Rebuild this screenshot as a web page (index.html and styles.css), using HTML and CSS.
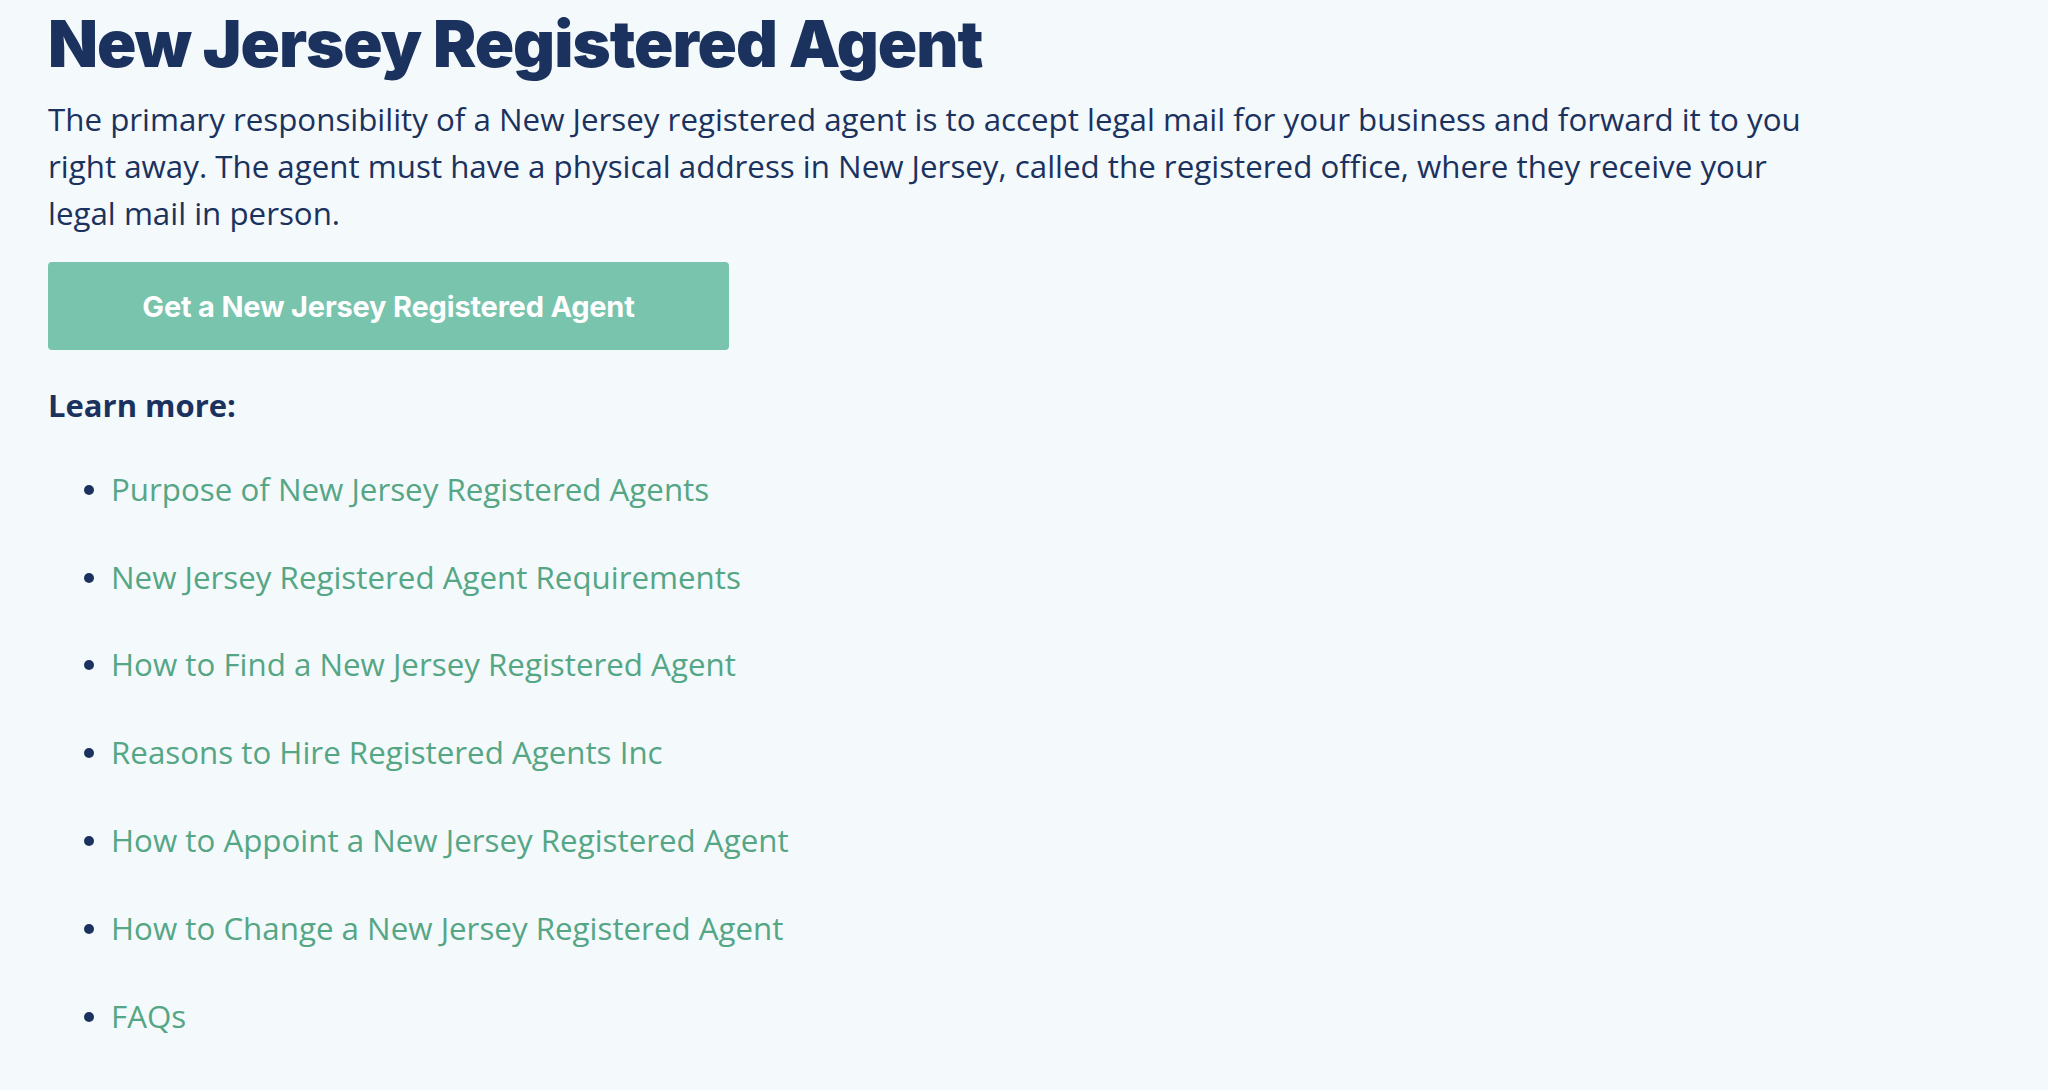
FILE: index.html
```html
<!DOCTYPE html>
<html lang="en">
<head>
<meta charset="utf-8">
<title>New Jersey Registered Agent</title>
<link rel="stylesheet" href="styles.css">
</head>
<body>
<main class="content">
  <h1 class="title">New Jersey Registered Agent</h1>
  <p class="intro">The primary responsibility of a New Jersey registered agent is to accept legal mail for your business and forward it to you right away. The agent must have a physical address in New Jersey, called the registered office, where they receive your legal mail in person.</p>
  <a class="cta" href="#">Get a New Jersey Registered Agent</a>
  <p class="learn">Learn more:</p>
  <ul class="links">
    <li><a href="#">Purpose of New Jersey Registered Agents</a></li>
    <li><a href="#">New Jersey Registered Agent Requirements</a></li>
    <li><a href="#">How to Find a New Jersey Registered Agent</a></li>
    <li><a href="#">Reasons to Hire Registered Agents Inc</a></li>
    <li><a href="#">How to Appoint a New Jersey Registered Agent</a></li>
    <li><a href="#">How to Change a New Jersey Registered Agent</a></li>
    <li><a href="#">FAQs</a></li>
  </ul>
</main>
</body>
</html>
```
FILE: styles.css
```css
html, body {
  margin: 0;
  padding: 0;
  background: #f4f9fc;
}
body {
  font-family: "Open Sans", "Liberation Sans", sans-serif;
  color: #1b325e;
}
.content {
  padding: 0 48px;
}
.title {
  font-family: Inter, "Liberation Sans", sans-serif;
  font-weight: 900;
  font-size: 65px;
  line-height: 80px;
  letter-spacing: -1px;
  margin: 4px 0 0;
  color: #1b325e;
}
.intro {
  font-size: 31.3px;
  line-height: 47px;
  margin: 12px 0 0;
  max-width: 1775px;
}
.cta {
  display: flex;
  align-items: center;
  justify-content: center;
  width: 681px;
  height: 88px;
  margin-top: 25px;
  background: #78c4ad;
  border-radius: 4px;
  color: #ffffff;
  font-family: Inter, "Liberation Sans", sans-serif;
  font-weight: 700;
  font-size: 29px;
  letter-spacing: -0.2px;
  text-decoration: none;
}
.learn {
  font-weight: 700;
  font-size: 31px;
  line-height: 40px;
  margin: 35px 0 0;
}
.links {
  list-style: none;
  margin: 20px 0 0;
  padding: 0 0 0 36px;
}
.links li {
  position: relative;
  display: flex;
  align-items: center;
  height: 87.8px;
  padding-left: 27px;
  font-size: 31.3px;
}
.links li::before {
  content: "";
  position: absolute;
  left: 0;
  top: 50%;
  width: 10px;
  height: 10px;
  margin-top: -4px;
  border-radius: 50%;
  background: #1b325e;
}
.links a {
  color: #55a685;
  text-decoration: none;
}
```
